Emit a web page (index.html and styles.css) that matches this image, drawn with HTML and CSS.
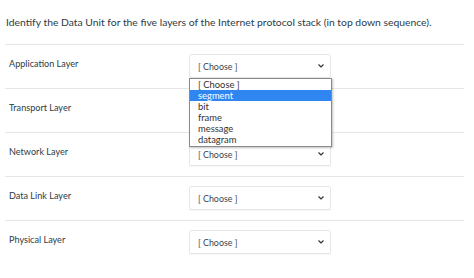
FILE: index.html
```html
<!DOCTYPE html>
<html>
<head>
<meta charset="utf-8">
<link rel="stylesheet" href="styles.css">
</head>
<body>
<div class="question">
  <p class="prompt">Identify the Data Unit for the five layers of the Internet protocol stack (in top down sequence).</p>
  <div class="rows">
    <div class="row">
      <div class="label">Application Layer</div>
      <div class="control">
        <div class="select"><span>[ Choose ]</span><svg class="chev" viewBox="0 0 6 4" width="6" height="4"><path d="M0.5 0.5 L3 3 L5.5 0.5" fill="none" stroke="#333" stroke-width="1.2"/></svg></div>
        <ul class="menu">
          <li>[ Choose ]</li>
          <li class="active">segment</li>
          <li>bit</li>
          <li>frame</li>
          <li>message</li>
          <li>datagram</li>
        </ul>
      </div>
    </div>
    <div class="row">
      <div class="label">Transport Layer</div>
      <div class="control">
        <div class="select covered"><span>[ Choose ]</span><svg class="chev" viewBox="0 0 6 4" width="6" height="4"><path d="M0.5 0.5 L3 3 L5.5 0.5" fill="none" stroke="#333" stroke-width="1.2"/></svg></div>
      </div>
    </div>
    <div class="row">
      <div class="label">Network Layer</div>
      <div class="control">
        <div class="select"><span>[ Choose ]</span><svg class="chev" viewBox="0 0 6 4" width="6" height="4"><path d="M0.5 0.5 L3 3 L5.5 0.5" fill="none" stroke="#333" stroke-width="1.2"/></svg></div>
      </div>
    </div>
    <div class="row">
      <div class="label">Data Link Layer</div>
      <div class="control">
        <div class="select"><span>[ Choose ]</span><svg class="chev" viewBox="0 0 6 4" width="6" height="4"><path d="M0.5 0.5 L3 3 L5.5 0.5" fill="none" stroke="#333" stroke-width="1.2"/></svg></div>
      </div>
    </div>
    <div class="row">
      <div class="label">Physical Layer</div>
      <div class="control">
        <div class="select"><span>[ Choose ]</span><svg class="chev" viewBox="0 0 6 4" width="6" height="4"><path d="M0.5 0.5 L3 3 L5.5 0.5" fill="none" stroke="#333" stroke-width="1.2"/></svg></div>
      </div>
    </div>
  </div>
</div>
</body>
</html>
```

FILE: styles.css
```css
html, body {
  margin: 0;
  padding: 0;
  background: #fff;
}
body {
  font-family: Lato, "Open Sans", sans-serif;
  color: #2d3b45;
  width: 474px;
  height: 278px;
  overflow: hidden;
}
.question {
  padding: 0 10px 0 5px;
}
.prompt {
  margin: 0;
  padding: 15px 0 0 1px;
  font-size: 10.35px;
  line-height: 14px;
  height: 29px;
  white-space: nowrap;
  color: #2d3b45;
}
.rows {
  display: flex;
  flex-direction: column;
}
.row {
  display: flex;
  align-items: flex-start;
  height: 44px;
  box-sizing: border-box;
  border-top: 1px solid #e6e6e6;
}
.label {
  width: 184px;
  padding: 12px 0 0 4px;
  box-sizing: border-box;
  font-size: 9.1px;
  line-height: 13px;
  color: #2d3b45;
}
.control {
  position: relative;
  margin-top: 9px;
}
.select {
  display: flex;
  align-items: center;
  justify-content: space-between;
  width: 142px;
  height: 24px;
  box-sizing: border-box;
  padding: 0 6px 0 8px;
  border: 1px solid #e4e6e8;
  border-radius: 2px;
  background: #fff;
  box-shadow: 0 1px 1px rgba(0,0,0,0.04);
  font-size: 8.9px;
  color: #3a4650;
}
.select.covered span {
  visibility: hidden;
}
.chev {
  display: block;
}
.menu {
  position: absolute;
  left: 0;
  top: 24px;
  width: 143px;
  margin: 0;
  padding: 0;
  list-style: none;
  background: #fff;
  border: 1px solid #8a8a8a;
  box-sizing: border-box;
  box-shadow: 1px 1px 2px rgba(0,0,0,0.25);
  font-size: 9.4px;
  z-index: 2;
}
.menu li {
  height: 11.1px;
  line-height: 11px;
  padding-left: 8px;
  color: #333;
}
.menu li.active {
  background: #2f86f0;
  color: #fff;
}
```
